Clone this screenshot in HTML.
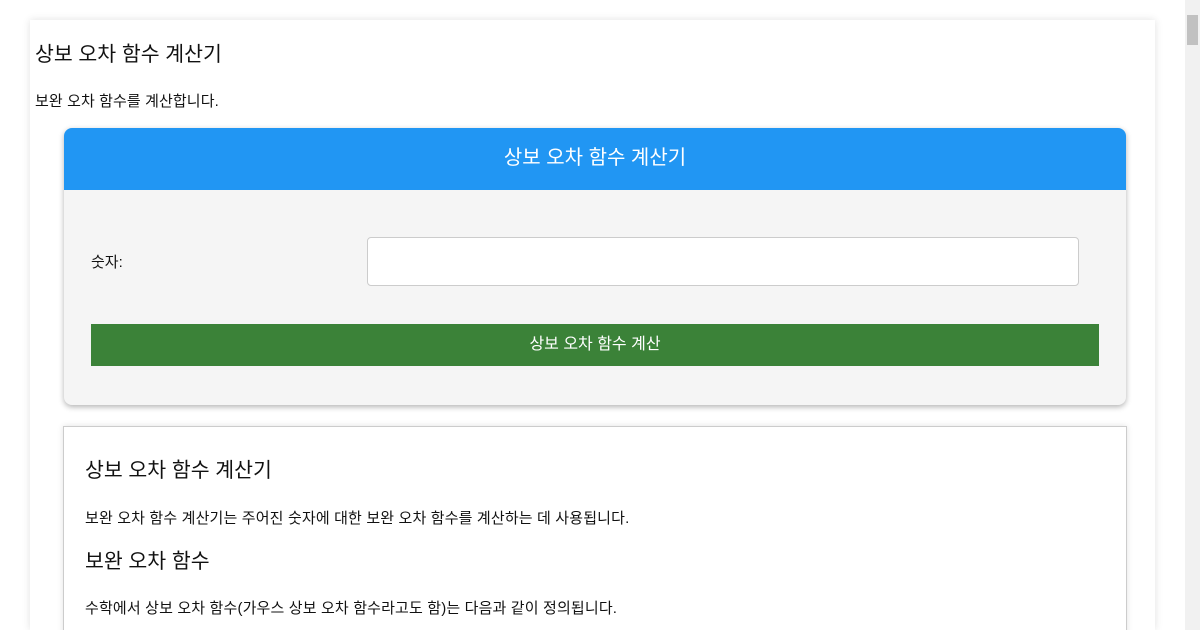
<!DOCTYPE html>
<html style="height:630px;overflow:hidden"><head><meta charset="utf-8"><style>
html,body{margin:0;width:1200px;height:630px;overflow:hidden}
body{background:#fff;font-family:"Liberation Sans","Noto Sans CJK KR",sans-serif;color:#111;position:relative}
.a{position:absolute;white-space:nowrap}
.main{position:absolute;left:30px;top:20px;width:1125px;height:610px;background:#fff;box-shadow:0 0 8px rgba(0,0,0,.12)}
.card{position:absolute;left:64px;top:128px;width:1062px;height:277px;background:#f5f5f5;border-radius:8px;box-shadow:0 2px 6px rgba(0,0,0,.3);overflow:hidden}
.hd{height:62px;background:#2196f3;color:#fff;font-size:20px;text-align:center;line-height:60px}
.inp{position:absolute;left:303px;top:109px;width:710px;height:47px;background:#fff;border:1px solid #ccc;border-radius:4px}
.btn{position:absolute;left:27px;top:196px;width:1008px;height:42px;background:#3b8238;color:#fff;font-size:16px;text-align:center;line-height:41px}
.box{position:absolute;left:63px;top:426px;width:1062px;height:230px;border:1px solid #ccc;background:#fff;box-shadow:0 0 6px rgba(0,0,0,.12)}
.sb{position:absolute;left:1185px;top:0;width:15px;height:630px;background:#f1f1f1}
.th{position:absolute;left:2px;top:15px;width:11px;height:30px;background:#c1c1c1}
</style></head><body>
<div class="main"></div>
<div class="a" style="left:35px;top:37px;font-size:20.5px">상보 오차 함수 계산기</div>
<div class="a" style="left:35px;top:90px;font-size:15px;letter-spacing:0.1px">보완 오차 함수를 계산합니다.</div>
<div class="card"><div class="hd">상보 오차 함수 계산기</div>
<div class="a" style="left:27px;top:123px;font-size:15px">숫자:</div>
<div class="inp"></div><div class="btn">상보 오차 함수 계산</div></div>
<div class="box">
<div class="a" style="left:21px;top:26px;font-size:20.5px">상보 오차 함수 계산기</div>
<div class="a" style="left:21px;top:80px;font-size:15px;letter-spacing:0.15px">보완 오차 함수 계산기는 주어진 숫자에 대한 보완 오차 함수를 계산하는 데 사용됩니다.</div>
<div class="a" style="left:21px;top:117px;font-size:20.5px">보완 오차 함수</div>
<div class="a" style="left:21px;top:170px;font-size:15px;letter-spacing:0.15px">수학에서 상보 오차 함수(가우스 상보 오차 함수라고도 함)는 다음과 같이 정의됩니다.</div>
</div>
<div class="sb"><div class="th"></div></div>
</body></html>
